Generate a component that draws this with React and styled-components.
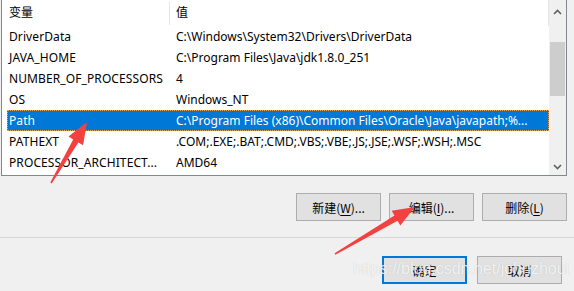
import React from "react";
import styled, { createGlobalStyle } from "styled-components";

const rows = [
  { name: "DriverData", value: "C:\\Windows\\System32\\Drivers\\DriverData" },
  { name: "JAVA_HOME", value: "C:\\Program Files\\Java\\jdk1.8.0_251" },
  { name: "NUMBER_OF_PROCESSORS", value: "4" },
  { name: "OS", value: "Windows_NT" },
  { name: "Path", value: "C:\\Program Files (x86)\\Common Files\\Oracle\\Java\\javapath;%...", selected: true },
  { name: "PATHEXT", value: ".COM;.EXE;.BAT;.CMD;.VBS;.VBE;.JS;.JSE;.WSF;.WSH;.MSC" },
  { name: "PROCESSOR_ARCHITECT...", value: "AMD64" },
];

// 화살표 다각형 좌표 계산
const arrowPoints = (x1, y1, x2, y2, headLen = 22, headW = 17, shaftW = 6) => {
  const L = Math.hypot(x2 - x1, y2 - y1);
  const dx = (x2 - x1) / L;
  const dy = (y2 - y1) / L;
  const nx = -dy;
  const ny = dx;
  const bx = x2 - dx * headLen;
  const by = y2 - dy * headLen;
  const p = (x, y) => `${x.toFixed(1)},${y.toFixed(1)}`;
  return [
    p(x1 + nx * 0.8, y1 + ny * 0.8),
    p(bx + (nx * shaftW) / 2, by + (ny * shaftW) / 2),
    p(bx + (nx * headW) / 2, by + (ny * headW) / 2),
    p(x2, y2),
    p(bx - (nx * headW) / 2, by - (ny * headW) / 2),
    p(bx - (nx * shaftW) / 2, by - (ny * shaftW) / 2),
    p(x1 - nx * 0.8, y1 - ny * 0.8),
  ].join(" ");
};

const App = () => {
  return (
    <Page>
      <GlobalStyle />
      <ListBox>
        <ListContent>
          <Header>
            <HeaderCell width="163px">变量</HeaderCell>
            <HeaderCell grow>值</HeaderCell>
          </Header>
          {rows.map((r, i) => (
            <Row key={i} selected={r.selected}>
              <NameCell>{r.name}</NameCell>
              <ValueCell>{r.value}</ValueCell>
            </Row>
          ))}
        </ListContent>
        <ScrollBar>
          <ScrollArrow>
            <svg width="9" height="6" viewBox="0 0 9 6">
              <path d="M1 5 L4.5 1.5 L8 5" fill="none" stroke="#606060" strokeWidth="1.6" />
            </svg>
          </ScrollArrow>
          <Track>
            <Thumb />
          </Track>
          <ScrollArrow>
            <svg width="9" height="6" viewBox="0 0 9 6">
              <path d="M1 1 L4.5 4.5 L8 1" fill="none" stroke="#606060" strokeWidth="1.6" />
            </svg>
          </ScrollArrow>
        </ScrollBar>
      </ListBox>

      <ButtonRow>
        <Button>新建(<u>W</u>)...</Button>
        <Button>编辑(<u>I</u>)...</Button>
        <Button>删除(<u>L</u>)</Button>
      </ButtonRow>

      <Divider />

      <FooterRow>
        <Button primary>确定</Button>
        <Button>取消</Button>
      </FooterRow>

      <Watermark>https://blog.csdn.net/johnzhoui</Watermark>

      <Overlay width="574" height="291" viewBox="0 0 574 291">
        <polygon points={arrowPoints(51, 183, 87, 122)} fill="#f2413f" />
        <polygon points={arrowPoints(335, 254, 415, 207)} fill="#f2413f" />
      </Overlay>
    </Page>
  );
};

const GlobalStyle = createGlobalStyle`
  html, body {
    margin: 0;
    padding: 0;
    background: #f0f0f0;
  }
  body {
    font-family: "Noto Sans", "Noto Sans CJK SC", sans-serif;
    font-size: 12px;
    color: #000000;
  }
`;

const Page = styled.div`
  position: relative;
  width: 574px;
  height: 291px;
  overflow: hidden;
  background: #f0f0f0;
`;

const ListBox = styled.div`
  display: flex;
  margin-left: 1px;
  width: 564px;
  height: 175px;
  background: #ffffff;
  border: 1px solid #828790;
  border-top: none;
`;

const ListContent = styled.div`
  flex: 1;
  display: flex;
  flex-direction: column;
`;

const Header = styled.div`
  display: flex;
  height: 26px;
  padding-left: 5px;
  border-right: 1px solid #e5e5e5;
`;

const HeaderCell = styled.div`
  ${(props) => (props.width ? `width: ${props.width};` : "")}
  ${(props) => (props.grow ? "flex: 1;" : "")}
  display: flex;
  align-items: center;
  margin-top: 2px;
  height: 23px;
  padding-bottom: 4px;
  padding-left: ${(props) => (props.grow ? "6px" : "2px")};
  box-sizing: border-box;
  border-right: ${(props) => (props.grow ? "none" : "1px solid #e5e5e5")};
  font-family: "Noto Sans CJK SC", sans-serif;
  font-size: 12px;
`;

const Row = styled.div`
  display: flex;
  align-items: center;
  height: 21px;
  margin-left: 5px;
  box-sizing: border-box;
  background: ${(props) => (props.selected ? "#0078d7" : "transparent")};
  color: ${(props) => (props.selected ? "#ffffff" : "#000000")};
  border: 1px dotted ${(props) => (props.selected ? "#e8a860" : "transparent")};
  white-space: nowrap;
`;

const NameCell = styled.div`
  width: 167px;
  padding-left: 1px;
  letter-spacing: 0.1px;
`;

const ValueCell = styled.div`
  flex: 1;
  overflow: hidden;
`;

const ScrollBar = styled.div`
  width: 17px;
  display: flex;
  flex-direction: column;
  background: #f0f0f0;
`;

const ScrollArrow = styled.div`
  height: 17px;
  display: flex;
  align-items: center;
  justify-content: center;
  padding-top: 3px;
`;

const Track = styled.div`
  flex: 1;
  padding-top: 22px;
`;

const Thumb = styled.div`
  height: 54px;
  margin: 0 1px;
  background: #cdcdcd;
`;

const ButtonRow = styled.div`
  display: flex;
  justify-content: flex-end;
  gap: 8px;
  padding: 17px 7px 0 0;
`;

const FooterRow = styled.div`
  display: flex;
  justify-content: flex-end;
  gap: 10px;
  padding: 18px 12px 0 0;
`;

const Button = styled.button`
  width: 85px;
  height: 28px;
  padding: 0;
  display: flex;
  align-items: center;
  justify-content: center;
  background: #e1e1e1;
  border: ${(props) => (props.primary ? "2px solid #0078d7" : "1px solid #adadad")};
  font-family: "Noto Sans CJK SC", sans-serif;
  font-size: 12px;
  color: #000000;
  box-sizing: border-box;

  u {
    text-decoration: underline;
    text-underline-offset: 2px;
  }
`;

const Divider = styled.div`
  margin-top: 16px;
  height: 1px;
  background: #d8d8d8;
`;

const Watermark = styled.div`
  position: absolute;
  left: 353px;
  top: 260px;
  font-family: "Liberation Sans", sans-serif;
  font-size: 16px;
  color: rgba(255, 255, 255, 0.8);
  text-shadow: 0 0 1px rgba(140, 140, 140, 0.45);
  pointer-events: none;
  white-space: nowrap;
`;

const Overlay = styled.svg`
  position: absolute;
  left: 0;
  top: 0;
  pointer-events: none;
`;

export default App;
